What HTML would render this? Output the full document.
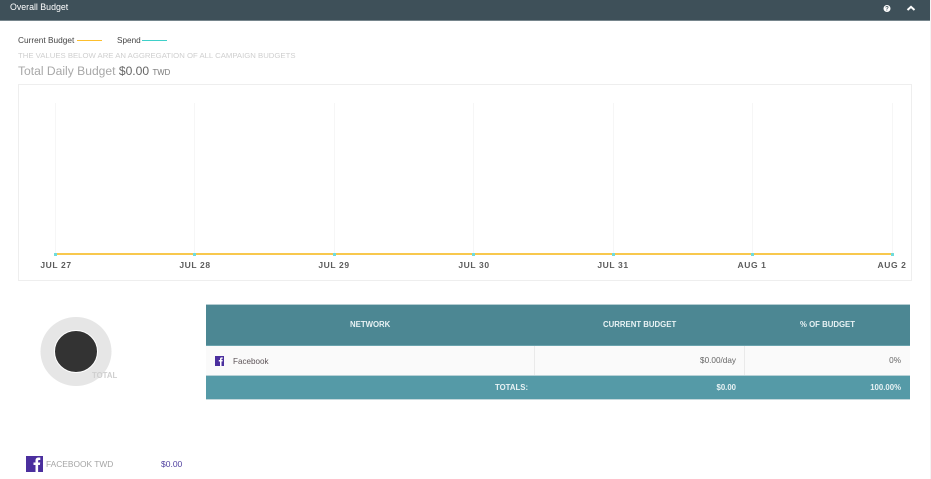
<!DOCTYPE html>
<html><head><meta charset="utf-8">
<style>
html,body{margin:0;padding:0;background:#fff}
body{position:relative;width:931px;height:479px;overflow:hidden;font-family:"Liberation Sans",sans-serif}
.a{position:absolute;white-space:nowrap;line-height:12px}
.b{position:absolute}
.t{font-size:7.800px;font-weight:bold;color:#e8f2f4}
.d{font-size:8.500px;font-weight:bold;color:#5c5c5c;letter-spacing:.6px;top:259px;width:60px;text-align:center}
.g{position:absolute;top:103px;width:1px;height:151px;background:#f6f6f6}
.m{position:absolute;top:253px;width:3px;height:3px;background:#6fdcdc}
</style></head><body>
<div class="b" style="left:0;top:0;width:931px;height:20px;background:#3e5059;border-bottom:1px solid #76858c"></div>
<div class="a" style="left:10px;top:1px;font-size:8.800px;color:#fff">Overall Budget</div>
<svg class="b" style="left:880px;top:2px" width="40" height="12" viewBox="0 0 40 12">
<circle cx="7" cy="6.500" r="3.500" fill="#fff"/>
<text x="7" y="8.700" font-size="6" font-weight="bold" text-anchor="middle" fill="#3e5059" font-family="Liberation Sans">?</text>
<path d="M27.500 8 L31 4.800 L34.500 8" fill="none" stroke="#fff" stroke-width="2"/>
</svg>
<div class="b" style="left:930px;top:0;width:1px;height:479px;background:#f4f4f4"></div>

<div class="a" style="left:18px;top:34px;font-size:8.300px;color:#444">Current Budget</div>
<div class="b" style="left:77px;top:40px;width:25px;height:1px;background:#fdbf2d"></div>
<div class="a" style="left:117px;top:35px;font-size:8.200px;color:#444">Spend</div>
<div class="b" style="left:142px;top:40px;width:25px;height:1px;background:#3fd0c9"></div>
<div class="a" style="left:18px;top:50px;font-size:7.750px;color:#cfcfcf">THE VALUES BELOW ARE AN AGGREGATION OF ALL CAMPAIGN BUDGETS</div>
<div class="a" style="left:18px;top:64px;font-size:12.100px;line-height:14px;color:#a8a8a8">Total Daily Budget <span style="color:#666">$0.00</span> <span style="font-size:7.800px;color:#777">TWD</span></div>

<div class="b" style="left:18px;top:84px;width:892px;height:195px;border:1px solid #eeeeee"></div>
<div class="g" style="left:55px"></div><div class="g" style="left:194px"></div><div class="g" style="left:334px"></div><div class="g" style="left:473px"></div><div class="g" style="left:613px"></div><div class="g" style="left:752px"></div><div class="g" style="left:892px"></div>
<div class="b" style="left:55px;top:253px;width:837px;height:2px;background:#f8c84e"></div>
<div class="m" style="left:54px"></div><div class="m" style="left:193px"></div><div class="m" style="left:333px"></div><div class="m" style="left:472px"></div><div class="m" style="left:612px"></div><div class="m" style="left:751px"></div><div class="m" style="left:891px"></div>
<div class="a d" style="left:26px">JUL 27</div>
<div class="a d" style="left:165px">JUL 28</div>
<div class="a d" style="left:304px">JUL 29</div>
<div class="a d" style="left:444px">JUL 30</div>
<div class="a d" style="left:583px">JUL 31</div>
<div class="a d" style="left:722px">AUG 1</div>
<div class="a d" style="left:862px">AUG 2</div>

<svg class="b" style="left:40px;top:317px" width="72" height="70" viewBox="0 0 72 70">
<ellipse cx="36" cy="34.500" rx="35.500" ry="34.500" fill="#e6e6e6"/>
<ellipse cx="36" cy="34.500" rx="21.500" ry="21" fill="#333" stroke="#fff" stroke-width="1"/>
</svg>
<div class="a" style="left:92px;top:370px;font-size:7.800px;font-weight:bold;color:#cfcfcf">TOTAL</div>

<div class="b" style="left:206px;top:304px;width:704px;height:1px;background:#b5cdd2"></div>
<div class="b" style="left:206px;top:305px;width:704px;height:40px;background:#4c8793"></div>
<div class="b" style="left:206px;top:345px;width:704px;height:31px;background:#fafafa;box-sizing:border-box;border-top:1px solid #6aa3ad;border-bottom:1px solid #b9d2d7"></div>
<div class="b" style="left:534px;top:346px;width:1px;height:29px;background:#eaeaea"></div>
<div class="b" style="left:744px;top:346px;width:1px;height:29px;background:#eaeaea"></div>
<div class="b" style="left:206px;top:376px;width:704px;height:24px;background:#559aa7;border-bottom:1px solid #c4d8dc;box-sizing:border-box"></div>
<div class="a t" style="left:350px;top:319px">NETWORK</div>
<div class="a t" style="left:603px;top:319px">CURRENT BUDGET</div>
<div class="a t" style="left:800px;top:319px">% OF BUDGET</div>
<svg class="b" style="left:215px;top:356px" width="9" height="10" viewBox="0 0 9 10"><rect width="9" height="10" fill="#4b2f9e"/><path d="M5 10V5.500H3.800V4H5V3C5 1.900 5.700 1.400 6.600 1.400H7.700V2.800H7C6.600 2.800 6.500 3 6.500 3.300V4H7.700L7.500 5.500H6.500V10Z" fill="#fff"/></svg>
<div class="a" style="left:233px;top:356px;font-size:8.100px;color:#5d5458">Facebook</div>
<div class="a" style="right:195px;top:355px;font-size:8.200px;color:#666">$0.00/day</div>
<div class="a" style="right:30px;top:355px;font-size:8.200px;color:#666">0%</div>
<div class="a t" style="left:495px;top:382px">TOTALS:</div>
<div class="a t" style="right:195px;top:382px">$0.00</div>
<div class="a t" style="right:30px;top:382px">100.00%</div>

<svg class="b" style="left:26px;top:456px" width="17" height="16" viewBox="0 0 17 16"><rect width="17" height="16" fill="#4b2f9e"/><path d="M9.500 16V9H7.500V6.500H9.500V4.500C9.500 2.500 10.700 1.500 12.400 1.500H14.300V4H13C12.300 4 12.100 4.400 12.100 5V6.500H14.200L13.900 9H12.100V16Z" fill="#fff"/></svg>
<div class="a" style="left:46px;top:458px;font-size:8.400px;color:#a5a5a5">FACEBOOK TWD</div>
<div class="a" style="left:161px;top:458px;font-size:8.500px;color:#4f3f9f">$0.00</div>
</body></html>
